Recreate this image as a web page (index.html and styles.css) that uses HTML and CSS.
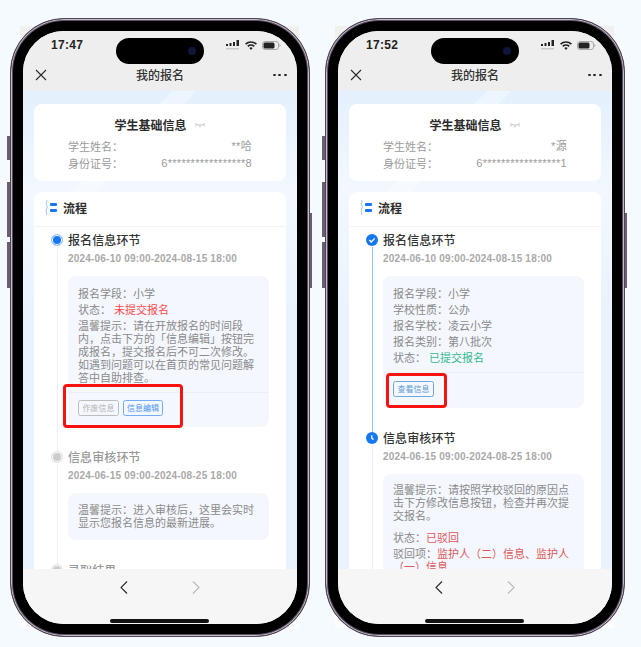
FILE: index.html
```html
<!DOCTYPE html>
<html lang="zh-CN">
<head>
<meta charset="utf-8">
<title>我的报名</title>
<link rel="stylesheet" href="styles.css">
</head>
<body>
<main class="stage">

<section class="phone">
  <i class="key key-silent"></i><i class="key key-up"></i><i class="key key-down"></i><i class="key key-power"></i>
  <div class="screen">
    <header class="top">
      <div class="status">
        <span class="time">17:47</span>
        <span class="sys">
          <svg width="14" height="10" viewBox="0 0 14 10"><path class="sig" d="M0 4h2v2H0zM3.5 3h2v3h-2zM7 2h2v4H7zM10.500 0h2.500v6h-2.500z"/><path class="sig-off" d="M0 8h13v1.500H0z"/></svg>
          <svg width="12" height="9" viewBox="0 0 12 9"><path class="wifi" d="M6 9 4.300 7a2.500 2.500 0 0 1 3.400 0zM3.300 5.900 2.200 4.700a5.600 5.600 0 0 1 7.600 0L8.700 5.900a4 4 0 0 0-5.400 0zM1.200 3.700 0 2.500a8.800 8.800 0 0 1 12 0l-1.200 1.200a7.100 7.100 0 0 0-9.600 0z"/></svg>
          <svg width="19" height="9" viewBox="0 0 19 9"><rect x=".5" y=".5" width="16" height="8" rx="2.500" class="bat-o"/><rect x="1.500" y="1.500" width="11" height="6" rx="1.500" class="bat-f"/><path d="M17.500 3v3c.8-.3 1-1 1-1.500s-.2-1.200-1-1.500z" class="bat-o2"/></svg>
        </span>
      </div>
      <div class="island"><i class="cam"></i></div>
      <div class="nav">
        <svg width="12" height="12" viewBox="0 0 12 12"><path class="ln" d="M1 1l10 10M11 1 1 11"/></svg>
        <span class="nav-title">我的报名</span>
        <span class="more"><i></i><i></i><i></i></span>
      </div>
    </header>
    <div class="content">
      <div class="card info">
        <div class="info-title"><span>学生基础信息</span><svg width="12" height="6" viewBox="0 0 12 6"><path class="lash" d="M1 1.500c2.500 2 7.500 2 10 0M2.500 3 1.500 4.500M6 3.500V5.500M9.500 3l1 1.500"/></svg></div>
        <div class="info-row"><span>学生姓名&#xFF1A;</span><span class="val">**哈</span></div>
        <div class="info-row"><span>身份证号&#xFF1A;</span><span class="val">6*****************8</span></div>
      </div>
      <div class="card flow">
        <div class="flow-head">
          <svg width="12" height="15" viewBox="0 0 12 15"><path class="wave" d="M1.500 0c1.500 2-1 3 0 5s1.200 2 0 4 1 4 0 6"/><rect x="5" y="3" width="7" height="3" rx="1" class="bar"/><rect x="5" y="9" width="7" height="3" rx="1" class="bar"/></svg>
          <span>流程</span>
        </div>
        <div class="step">
          <div class="rail"><i class="dot dot-on"></i><i class="line"></i></div>
          <div class="body">
            <h3 class="step-title">报名信息环节</h3>
            <p class="date">2024-06-10 09:00-2024-08-15 18:00</p>
            <div class="box">
              <p class="row">报名学段&#xFF1A;小学</p>
              <p class="row">状态&#xFF1A;<b class="state red">未提交报名</b></p>
              <p class="tip tip-gap">温馨提示&#xFF1A;请在开放报名的时间段内&#xFF0C;点击下方的「信息编辑」按钮完成报名&#xFF0C;提交报名后不可二次修改。如遇到问题可以在首页的常见问题解答中自助排查。</p>
              <div class="foot"><span class="btn btn-gray">作废信息</span><span class="btn btn-blue">信息编辑</span></div>
              <div class="mark mark-a"></div>
            </div>
          </div>
        </div>
        <div class="step">
          <div class="rail"><i class="dot dot-off"></i><i class="line"></i></div>
          <div class="body">
            <h3 class="step-title muted">信息审核环节</h3>
            <p class="date">2024-06-15 09:00-2024-08-25 18:00</p>
            <div class="box box-plain">
              <p class="tip">温馨提示&#xFF1A;进入审核后&#xFF0C;这里会实时显示您报名信息的最新进展。</p>
            </div>
          </div>
        </div>
        <div class="step">
          <div class="rail"><i class="dot dot-off"></i><i class="line"></i></div>
          <div class="body"><h3 class="step-title muted">录取结果</h3></div>
        </div>
      </div>
    </div>
    <footer class="bottom">
      <svg width="8" height="13" viewBox="0 0 8 13"><path class="ln" d="M7 .5 1 6.500l6 6"/></svg>
      <svg width="8" height="13" viewBox="0 0 8 13"><path class="ln ln-off" d="m1 .5 6 6-6 6"/></svg>
      <i class="home"></i>
    </footer>
  </div>
</section>

<section class="phone">
  <i class="key key-silent"></i><i class="key key-up"></i><i class="key key-down"></i><i class="key key-power"></i>
  <div class="screen">
    <header class="top">
      <div class="status">
        <span class="time">17:52</span>
        <span class="sys">
          <svg width="14" height="10" viewBox="0 0 14 10"><path class="sig" d="M0 4h2v2H0zM3.5 3h2v3h-2zM7 2h2v4H7zM10.500 0h2.500v6h-2.500z"/><path class="sig-off" d="M0 8h13v1.500H0z"/></svg>
          <svg width="12" height="9" viewBox="0 0 12 9"><path class="wifi" d="M6 9 4.300 7a2.500 2.500 0 0 1 3.400 0zM3.300 5.900 2.200 4.700a5.600 5.600 0 0 1 7.600 0L8.700 5.900a4 4 0 0 0-5.400 0zM1.200 3.700 0 2.500a8.800 8.800 0 0 1 12 0l-1.200 1.200a7.100 7.100 0 0 0-9.600 0z"/></svg>
          <svg width="19" height="9" viewBox="0 0 19 9"><rect x=".5" y=".5" width="16" height="8" rx="2.500" class="bat-o"/><rect x="1.500" y="1.500" width="11" height="6" rx="1.500" class="bat-f"/><path d="M17.500 3v3c.8-.3 1-1 1-1.500s-.2-1.200-1-1.500z" class="bat-o2"/></svg>
        </span>
      </div>
      <div class="island"><i class="cam"></i></div>
      <div class="nav">
        <svg width="12" height="12" viewBox="0 0 12 12"><path class="ln" d="M1 1l10 10M11 1 1 11"/></svg>
        <span class="nav-title">我的报名</span>
        <span class="more"><i></i><i></i><i></i></span>
      </div>
    </header>
    <div class="content">
      <div class="card info">
        <div class="info-title"><span>学生基础信息</span><svg width="12" height="6" viewBox="0 0 12 6"><path class="lash" d="M1 1.500c2.500 2 7.500 2 10 0M2.500 3 1.500 4.500M6 3.500V5.500M9.500 3l1 1.500"/></svg></div>
        <div class="info-row"><span>学生姓名&#xFF1A;</span><span class="val">*源</span></div>
        <div class="info-row"><span>身份证号&#xFF1A;</span><span class="val">6*****************1</span></div>
      </div>
      <div class="card flow">
        <div class="flow-head">
          <svg width="12" height="15" viewBox="0 0 12 15"><path class="wave" d="M1.500 0c1.500 2-1 3 0 5s1.200 2 0 4 1 4 0 6"/><rect x="5" y="3" width="7" height="3" rx="1" class="bar"/><rect x="5" y="9" width="7" height="3" rx="1" class="bar"/></svg>
          <span>流程</span>
        </div>
        <div class="step">
          <div class="rail">
            <svg class="badge" width="12" height="12" viewBox="0 0 12 12"><circle cx="6" cy="6" r="6" class="bar"/><path class="tick" d="m3.300 6 2 2 3.400-3.600"/></svg>
            <i class="line line-on"></i>
          </div>
          <div class="body">
            <h3 class="step-title">报名信息环节</h3>
            <p class="date">2024-06-10 09:00-2024-08-15 18:00</p>
            <div class="box">
              <p class="row">报名学段&#xFF1A;小学</p>
              <p class="row">学校性质&#xFF1A;公办</p>
              <p class="row">报名学校&#xFF1A;凌云小学</p>
              <p class="row">报名类别&#xFF1A;第八批次</p>
              <p class="row">状态&#xFF1A;<b class="state green">已提交报名</b></p>
              <div class="foot foot-tight"><span class="btn btn-view">查看信息</span></div>
              <div class="mark mark-b"></div>
            </div>
          </div>
        </div>
        <div class="step">
          <div class="rail">
            <svg class="badge" width="12" height="12" viewBox="0 0 12 12"><circle cx="6" cy="6" r="6" class="bar"/><path class="tick" d="M5.800 3.300v3l1.800 1.200"/></svg>
            <i class="line"></i>
          </div>
          <div class="body">
            <h3 class="step-title">信息审核环节</h3>
            <p class="date">2024-06-15 09:00-2024-08-25 18:00</p>
            <div class="box">
              <p class="tip">温馨提示&#xFF1A;请按照学校驳回的原因点击下方修改信息按钮&#xFF0C;检查并再次提交报名。</p>
              <p class="row row-gap">状态&#xFF1A;<b class="soft">已驳回</b></p>
              <p class="tip tip-gap">驳回项&#xFF1A;<b class="soft">监护人&#xFF08;二&#xFF09;信息、监护人&#xFF08;一&#xFF09;信息</b></p>
            </div>
          </div>
        </div>
      </div>
    </div>
    <footer class="bottom">
      <svg width="8" height="13" viewBox="0 0 8 13"><path class="ln" d="M7 .5 1 6.500l6 6"/></svg>
      <svg width="8" height="13" viewBox="0 0 8 13"><path class="ln ln-off" d="m1 .5 6 6-6 6"/></svg>
      <i class="home"></i>
    </footer>
  </div>
</section>

</main>
</body>
</html>
```

FILE: styles.css
```css
* { box-sizing: border-box; }
html, body { margin: 0; height: 100%; }
body {
  background: #f5faff;
  font-family: "Noto Sans CJK SC", "Noto Sans", sans-serif;
  overflow: hidden;
}
p, h3 { margin: 0; font-weight: 400; }
i { display: block; font-style: normal; }
b { font-weight: 400; }

.stage { display: flex; gap: 15px; padding: 18px 0 0 10px; }

.phone {
  position: relative;
  width: 300px;
  height: 619px;
  padding: 12px;
  background: #000;
  border: 1px solid #4f4458;
  border-radius: 54px;
  box-shadow: inset 0 0 0 1px #c4bdc8, inset 0 0 0 2px #5a4f62;
}
.phone::before {
  content: "";
  position: absolute;
  z-index: -1;
  left: 9px;
  right: 10px;
  top: 7px;
  height: 70px;
  background: #f0f0ef;
}
.phone::after {
  content: "";
  position: absolute;
  z-index: -1;
  left: 9px;
  right: 10px;
  bottom: 8px;
  height: 70px;
  background: #fdfdfd;
}
.key { position: absolute; background: #6a5f72; width: 3px; }
.key-silent { left: -4px; top: 117px; height: 24px; }
.key-up { left: -4px; top: 163px; height: 55px; }
.key-down { left: -4px; top: 223px; height: 46px; }
.key-power { right: -3px; top: 194px; height: 75px; width: 2px; }

.screen {
  position: relative;
  display: flex;
  flex-direction: column;
  height: 593px;
  overflow: hidden;
  background: #fff;
  border-radius: 41px;
}

.top { flex: none; height: 60px; background: #eee; }
.status {
  display: flex;
  justify-content: space-between;
  align-items: center;
  height: 28px;
  padding: 0 16px 0 28px;
}
.time { font: 700 12px/14px "Liberation Sans", sans-serif; color: #222; letter-spacing: .3px; }
.sys { display: flex; align-items: center; gap: 5px; }
.sig { fill: #222; }
.sig-off { fill: #c9c9c9; }
.wifi { fill: #222; }
.bat-o { fill: none; stroke: #aaa; }
.bat-o2 { fill: #aaa; }
.bat-f { fill: #222; }

.island {
  position: absolute;
  left: 93px;
  top: 7px;
  width: 88px;
  height: 26px;
  background: #000;
  border-radius: 13px;
}
.cam {
  position: absolute;
  right: 8px;
  top: 9px;
  width: 8px;
  height: 8px;
  border-radius: 50%;
  background: #10163a;
}

.nav {
  display: flex;
  justify-content: space-between;
  align-items: center;
  height: 32px;
  padding: 0 12px;
}
.ln { fill: none; stroke: #2a2a2a; stroke-width: 1.1; }
.ln-off { stroke: #b8b8b8; }
.nav-title { font-size: 12px; line-height: 16px; font-weight: 500; color: #333; }
.more { display: flex; gap: 2.500px; width: 12px; }
.more i { flex: none; width: 3px; height: 2.500px; background: #222; border-radius: 50%; }

.content {
  flex: 1;
  min-height: 0;
  overflow: hidden;
  padding: 13px 11px 0;
  display: flex;
  flex-direction: column;
  gap: 11px;
  background:
    linear-gradient(135deg, transparent 38%, rgba(255,255,255,.35) 38% 44%, transparent 44%) 0 0 / 100% 120px no-repeat,
    linear-gradient(180deg, #e3f0fd 0, #f2f8fe 100px, #e9f3fe 220px);
}

.card { flex: none; background: #fff; border-radius: 8px; }
.info { height: 77px; padding: 14px 34px 0; }
.info-title {
  display: flex;
  justify-content: center;
  align-items: center;
  gap: 7px;
  margin-bottom: 6px;
  font-size: 12px;
  line-height: 14px;
  font-weight: 700;
  color: #2c2c2c;
}
.lash { fill: none; stroke: #999; stroke-width: .6; }
.info-row {
  display: flex;
  justify-content: space-between;
  font-size: 11px;
  line-height: 17px;
  color: #9a9a9a;
}
.val { font-family: "Liberation Sans", "Noto Sans CJK SC", sans-serif; letter-spacing: .3px; }

.flow { padding-bottom: 20px; }
.flow-head {
  display: flex;
  align-items: center;
  gap: 6px;
  height: 35px;
  padding: 0 0 3px 11px;
  border-bottom: 1px solid #f2f3f5;
  font-size: 12px;
  font-weight: 700;
  color: #2c2c2c;
}
.wave { fill: none; stroke: #8fc0f8; stroke-width: .9; }
.bar { fill: #1677f5; }
.tick { fill: none; stroke: #fff; stroke-width: 1.300; }

.step { display: grid; grid-template-columns: 34px 1fr; }
.rail { display: flex; flex-direction: column; padding: 7px 0 0 17px; }
.badge { display: block; flex: none; }
.dot { flex: none; width: 12px; height: 12px; border-radius: 50%; }
.dot-on { background: #1677f5; border: 1px solid #a9cbfb; box-shadow: inset 0 0 0 1px #fff; }
.dot-off { background: #ccc; border: 1.500px solid #e6e6e6; box-shadow: inset 0 0 0 1px #fff; }
.line { flex: 1; width: 1px; margin: 1px 0 -7px 5.500px; background: #eeeeee; }
.line-on { width: 1.500px; background: #8fc0ea; }

.body { padding: 6px 17px 17px 0; min-width: 0; }
.step-title { font-size: 12px; line-height: 14px; font-weight: 500; color: #333; letter-spacing: .1px; }
.muted { color: #999; }
.date {
  margin: 5px 0 10px;
  font: 700 10px/14px "Liberation Sans", sans-serif;
  color: #a9a9a9;
  letter-spacing: .2px;
  white-space: nowrap;
}

.box {
  position: relative;
  padding: 9px 14px 11px 10px;
  background: #f4f7fe;
  border-radius: 8px;
  font-size: 11px;
  color: #8a8a8a;
}
.box-plain { padding-top: 10px; }
.row { line-height: 16px; }
.row-gap { margin-top: 7px; }
.tip { line-height: 13px; }
.tip-gap { margin-top: 2px; }
.state { margin-left: 3px; }
.red { color: #fb4a4a; }
.green { color: #35b98f; }
.soft { color: #dd5858; }

.foot {
  display: flex;
  gap: 4px;
  margin: 8px -14px 0 -10px;
  padding: 7px 10px 0;
  border-top: 1px solid #eceff6;
}
.foot-tight { margin-top: 7px; padding-top: 8px; }
.btn {
  display: flex;
  justify-content: center;
  align-items: center;
  width: 41px;
  height: 16px;
  border-radius: 2.500px;
  font-size: 8px;
  line-height: 14px;
  border: 1px solid;
}
.btn-gray { color: #b5b5b5; border-color: #bcbcbc; }
.btn-blue { color: #4d96f5; border-color: #74adf7; width: 40px; }
.btn-view { color: #5c9bd6; border-color: #6fa8dc; }

.mark { position: absolute; border: 3px solid #f5120f; border-radius: 4px; }
.mark-a { left: -5px; bottom: -1px; width: 120px; height: 44px; }
.mark-b { left: 3px; bottom: 0; width: 61px; height: 35px; }

.bottom {
  position: relative;
  flex: none;
  height: 55px;
  display: flex;
  justify-content: center;
  align-items: flex-start;
  gap: 64px;
  padding-top: 12px;
  background: #f6f6f6;
}
.home {
  position: absolute;
  left: 87px;
  bottom: 1px;
  width: 99px;
  height: 4px;
  background: #111;
  border-radius: 2px;
}
```
